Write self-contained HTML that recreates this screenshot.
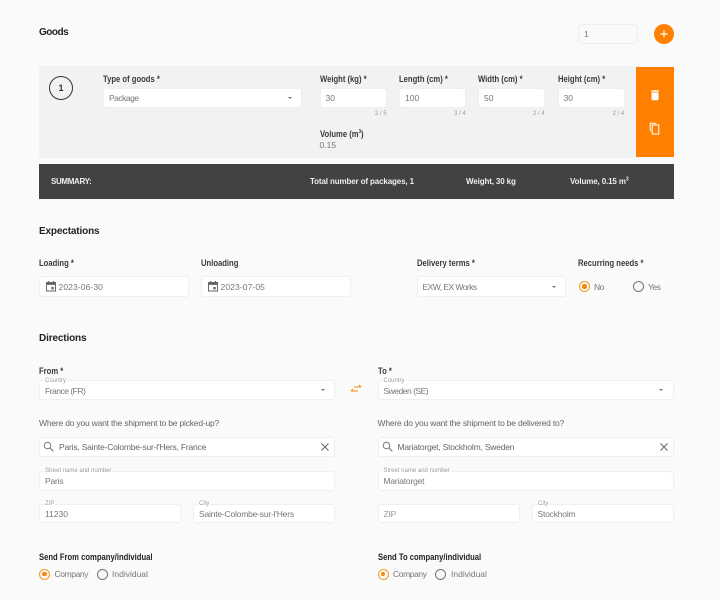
<!DOCTYPE html>
<html lang="en"><head><meta charset="utf-8"><title>Goods</title>
<style>
html,body{margin:0;padding:0;background:#fafafa}
body{position:relative;width:720px;height:600px;overflow:hidden;font-family:"Liberation Sans",sans-serif;color:#757575}
.a{position:absolute}
.t{position:absolute;white-space:nowrap;line-height:12px;height:12px}
.h{font-size:10px;font-weight:700;color:#222;letter-spacing:-.15px;margin-top:1px}
.l{font-size:8.8px;font-weight:700;color:#3a3a3a;margin-top:1px;transform:scaleX(.87);transform-origin:0 50%}
.v{font-size:8.5px;color:#777;letter-spacing:-.2px}
.d{letter-spacing:.1px}
.n{letter-spacing:0}
.c{font-size:6px;color:#999}
.f{font-size:6px;color:#999;background:#fff;padding:0 1px;line-height:7px;height:7px}
.b{position:absolute;box-sizing:border-box;background:#fff;border:1px solid #efefef;border-radius:3px}
.w{font-size:8px;font-weight:700;color:#eee;letter-spacing:-.13px}
.r{position:absolute;box-sizing:border-box;width:11px;height:11px;border-radius:50%;border:1px solid #757575}
.r.on{border:1.2px solid #f59a23}
.r.on::after{content:"";position:absolute;left:2px;top:2px;width:4.6px;height:4.6px;border-radius:50%;background:#f58a07}
svg{position:absolute;display:block}
.ar{position:absolute;width:0;height:0;border-left:2.5px solid transparent;border-right:2.5px solid transparent;border-top:2.5px solid #757575}
</style></head><body>

<div class="t h" style="left:39px;top:26px;letter-spacing:-.5px">Goods</div>
<div class="b" style="left:578px;top:24px;width:60px;height:20px;background:#fafafa"></div>
<div class="t v" style="left:584px;top:28px">1</div>
<div class="a" style="left:654px;top:24px;width:20px;height:20px;border-radius:50%;background:#ff8000"></div>
<svg style="left:654px;top:24px" width="20" height="20" viewBox="0 0 20 20"><path d="M10 6.5v7M6.5 10h7" stroke="#fff" stroke-width="1.2" fill="none"/></svg>

<div class="a" style="left:39px;top:66px;width:635px;height:92px;background:#f2f2f2;border-radius:2px"></div>
<div class="a" style="left:636px;top:67px;width:38px;height:90px;background:#ff8000"></div>
<svg style="left:649px;top:89px" width="12" height="12" viewBox="0 0 12 12"><path d="M2.5 3.5h7v6.8c0 .6-.4 1-1 1h-5c-.6 0-1-.4-1-1zM2 1.5h2.3l.5-.5h2.4l.5.5H10v1.2H2z" fill="#fff"/></svg>
<svg style="left:648px;top:122px" width="13" height="13" viewBox="0 0 13 13"><path d="M2.2 9.5V1.2h6.2" stroke="#fff" stroke-width="1" fill="none"/><rect x="4.2" y="3" width="6.6" height="9" stroke="#fff" stroke-width="1.1" fill="none"/></svg>

<div class="a" style="left:49px;top:76px;width:24px;height:24px;box-sizing:border-box;border:1.2px solid #333;border-radius:50%"></div>
<div class="t" style="left:49px;top:82px;width:24px;text-align:center;font-size:9px;font-weight:700;color:#333">1</div>

<div class="t l" style="left:103px;top:72px">Type of goods *</div>
<div class="b" style="left:103px;top:88px;width:199px;height:20px"></div>
<div class="t v" style="left:109px;top:92px;letter-spacing:-.5px">Package</div>
<div class="ar" style="left:288px;top:97px"></div>

<div class="t l" style="left:319.5px;top:72px">Weight (kg) *</div>
<div class="b" style="left:319.5px;top:88px;width:67px;height:20px"></div>
<div class="t v n" style="left:325.5px;top:92px">30</div>
<div class="t c" style="left:375px;top:107.5px">2 / 5</div>

<div class="t l" style="left:399px;top:72px">Length (cm) *</div>
<div class="b" style="left:399px;top:88px;width:67px;height:20px"></div>
<div class="t v n" style="left:405px;top:92px">100</div>
<div class="t c" style="left:454px;top:107.5px">3 / 4</div>

<div class="t l" style="left:478px;top:72px">Width (cm) *</div>
<div class="b" style="left:478px;top:88px;width:67px;height:20px"></div>
<div class="t v n" style="left:484px;top:92px">50</div>
<div class="t c" style="left:533px;top:107.5px">2 / 4</div>

<div class="t l" style="left:557.5px;top:72px">Height (cm) *</div>
<div class="b" style="left:557.5px;top:88px;width:67px;height:20px"></div>
<div class="t v n" style="left:563.5px;top:92px">30</div>
<div class="t c" style="left:612.5px;top:107.5px">2 / 4</div>

<div class="t l" style="left:319.5px;top:127px">Volume (m<sup style="font-size:5px;line-height:0">3</sup>)</div>
<div class="t v n" style="left:319.5px;top:139px">0.15</div>

<div class="a" style="left:39px;top:164px;width:635px;height:35px;background:#424242"></div>
<div class="t w" style="left:51px;top:175.5px;letter-spacing:-.35px">SUMMARY:</div>
<div class="t w" style="left:310px;top:175.5px">Total number of packages, 1</div>
<div class="t w" style="left:466px;top:175.5px">Weight, 30 kg</div>
<div class="t w" style="left:570px;top:175.5px">Volume, 0.15 m<sup style="font-size:5px;line-height:0">3</sup></div>

<div class="t h" style="left:39px;top:225px">Expectations</div>
<div class="t l" style="left:39px;top:256px">Loading *</div>
<div class="b" style="left:39px;top:276px;width:150px;height:21px"></div>
<svg style="left:45px;top:280px" width="12" height="12" viewBox="0 0 12 12"><path d="M1.5 2.5h9v8.5h-9z" stroke="#666" stroke-width="1" fill="none"/><path d="M1.5 2.5h9v2.4h-9zM3 1h1.2v2H3zM7.8 1H9v2H7.8z" fill="#666"/><rect x="6.3" y="7" width="2.4" height="2.4" fill="#666"/></svg>
<div class="t v d" style="left:58.5px;top:280.5px">2023-06-30</div>
<div class="t l" style="left:200.5px;top:256px">Unloading</div>
<div class="b" style="left:200.5px;top:276px;width:150px;height:21px"></div>
<svg style="left:207px;top:280px" width="12" height="12" viewBox="0 0 12 12"><path d="M1.5 2.5h9v8.5h-9z" stroke="#666" stroke-width="1" fill="none"/><path d="M1.5 2.5h9v2.4h-9zM3 1h1.2v2H3zM7.8 1H9v2H7.8z" fill="#666"/><rect x="6.3" y="7" width="2.4" height="2.4" fill="#666"/></svg>
<div class="t v d" style="left:220.5px;top:280.5px">2023-07-05</div>
<div class="t l" style="left:416.5px;top:256px">Delivery terms *</div>
<div class="b" style="left:416.5px;top:276px;width:149px;height:21px"></div>
<div class="t v" style="left:422.5px;top:280.5px;letter-spacing:-.55px">EXW, EX Works</div>
<div class="ar" style="left:551.5px;top:285.5px"></div>
<div class="t l" style="left:578px;top:256px">Recurring needs *</div>
<div class="r on" style="left:579px;top:281px"></div>
<div class="t v" style="left:594px;top:280.5px;letter-spacing:-.5px">No</div>
<div class="r" style="left:632.5px;top:281px"></div>
<div class="t v" style="left:648px;top:280.5px;letter-spacing:-.5px">Yes</div>

<div class="t h" style="left:39px;top:332px">Directions</div>
<div class="t l" style="left:39px;top:364px">From *</div>
<div class="b" style="left:39px;top:380px;width:296px;height:20px"></div>
<div class="t f" style="left:44px;top:378px">Country</div>
<div class="t v" style="left:45px;top:384.5px;letter-spacing:-.5px">France (FR)</div>
<div class="ar" style="left:320.5px;top:389px"></div>
<svg style="left:350px;top:384px" width="12" height="10" viewBox="0 0 12 10"><path d="M4 3h7M8.8 1l2.2 2M8 7H1M3.2 5L1 7" stroke="#f58a07" stroke-width="1.1" fill="none"/></svg>
<div class="t l" style="left:377.5px;top:364px">To *</div>
<div class="b" style="left:377.5px;top:380px;width:296.5px;height:20px"></div>
<div class="t f" style="left:382.5px;top:378px">Country</div>
<div class="t v" style="left:383.5px;top:384.5px;letter-spacing:-.5px">Sweden (SE)</div>
<div class="ar" style="left:659px;top:389px"></div>

<div class="t v" style="left:39px;top:417px;color:#666">Where do you want the shipment to be picked-up?</div>
<div class="b" style="left:39px;top:437px;width:296px;height:20px"></div>
<svg style="left:43px;top:441px" width="11" height="11" viewBox="0 0 11 11"><circle cx="4.5" cy="4.5" r="3.3" stroke="#777" stroke-width="1" fill="none"/><path d="M7 7l3.3 3.3" stroke="#777" stroke-width="1.1" fill="none"/></svg>
<div class="t v" style="left:59px;top:441px;color:#666">Paris, Sainte-Colombe-sur-l'Hers, France</div>
<svg style="left:320px;top:442px" width="10" height="10" viewBox="0 0 10 10"><path d="M1.5 1.5l7 7M8.5 1.5l-7 7" stroke="#666" stroke-width="1" fill="none"/></svg>
<div class="t v" style="left:377.5px;top:417px;color:#666">Where do you want the shipment to be delivered to?</div>
<div class="b" style="left:377.5px;top:437px;width:296.5px;height:20px"></div>
<svg style="left:382px;top:441px" width="11" height="11" viewBox="0 0 11 11"><circle cx="4.5" cy="4.5" r="3.3" stroke="#777" stroke-width="1" fill="none"/><path d="M7 7l3.3 3.3" stroke="#777" stroke-width="1.1" fill="none"/></svg>
<div class="t v" style="left:397.5px;top:441px;color:#666">Mariatorget, Stockholm, Sweden</div>
<svg style="left:659px;top:442px" width="10" height="10" viewBox="0 0 10 10"><path d="M1.5 1.5l7 7M8.5 1.5l-7 7" stroke="#666" stroke-width="1" fill="none"/></svg>

<div class="b" style="left:39px;top:471px;width:296px;height:20px"></div>
<div class="t f" style="left:44px;top:468px">Street name and number</div>
<div class="t v" style="left:45px;top:475px">Paris</div>
<div class="b" style="left:377.5px;top:471px;width:296.5px;height:20px"></div>
<div class="t f" style="left:382.5px;top:468px">Street name and number</div>
<div class="t v" style="left:383.5px;top:475px">Mariatorget</div>

<div class="b" style="left:39px;top:504px;width:142px;height:19px"></div>
<div class="t f" style="left:44px;top:501px">ZIP</div>
<div class="t v n" style="left:45px;top:508px">11230</div>
<div class="b" style="left:193px;top:504px;width:142px;height:19px"></div>
<div class="t f" style="left:198px;top:501px">City</div>
<div class="t v" style="left:199px;top:508px">Sainte-Colombe-sur-l'Hers</div>
<div class="b" style="left:377.5px;top:504px;width:142.5px;height:19px"></div>
<div class="t v" style="left:383.5px;top:508px;color:#999">ZIP</div>
<div class="b" style="left:532px;top:504px;width:142px;height:19px"></div>
<div class="t f" style="left:537px;top:501px">City</div>
<div class="t v" style="left:537.5px;top:508px">Stockholm</div>

<div class="t l" style="left:39px;top:550px;color:#222">Send From company/individual</div>
<div class="r on" style="left:39px;top:568.5px"></div>
<div class="t v" style="left:54.5px;top:568px;letter-spacing:-.4px">Company</div>
<div class="r" style="left:96.5px;top:568.5px"></div>
<div class="t v n" style="left:112px;top:568px">Individual</div>

<div class="t l" style="left:377.5px;top:550px;color:#222">Send To company/individual</div>
<div class="r on" style="left:377.5px;top:568.5px"></div>
<div class="t v" style="left:393px;top:568px;letter-spacing:-.4px">Company</div>
<div class="r" style="left:435px;top:568.5px"></div>
<div class="t v n" style="left:451px;top:568px">Individual</div>

</body></html>
